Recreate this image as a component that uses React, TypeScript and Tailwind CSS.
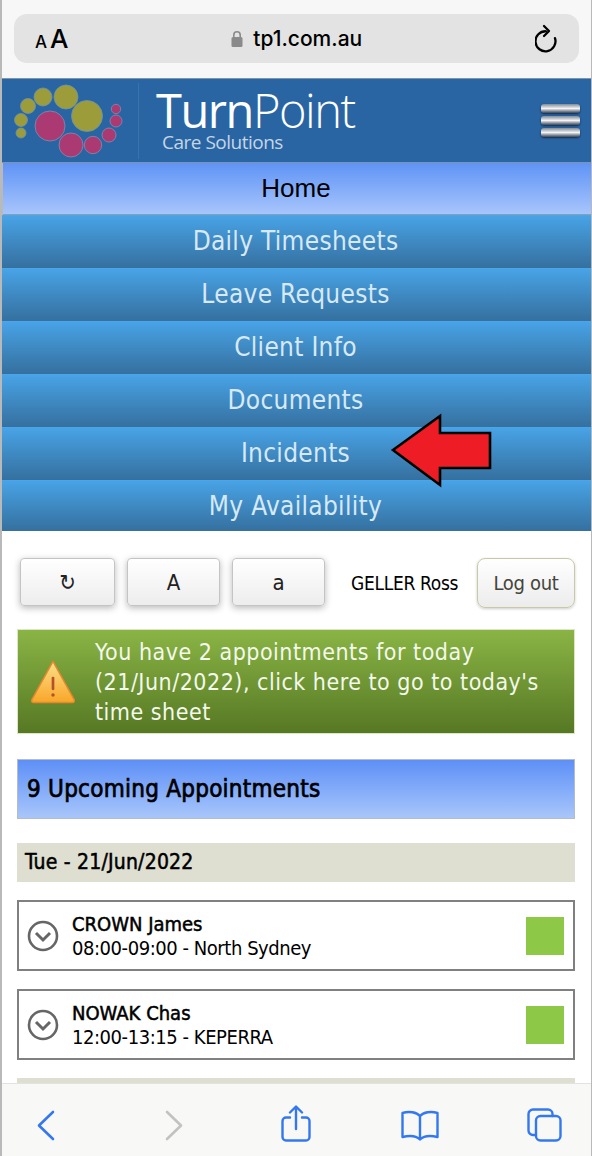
const navItems = ['Daily Timesheets', 'Leave Requests', 'Client Info', 'Documents', 'Incidents', 'My Availability'];

const appointments = [
  { name: 'CROWN James', detail: '08:00-09:00 - North Sydney' },
  { name: 'NOWAK Chas', detail: '12:00-13:15 - KEPERRA' },
];

function LogoDots() {
  return (
    <svg width="134" height="83" viewBox="2 79 134 83" className="shrink-0">
      <g fill="#9c9c3a" stroke="#6f93a8" strokeWidth="0.8">
        <circle cx="66" cy="97" r="12" />
        <circle cx="87" cy="116" r="15.5" />
        <circle cx="43" cy="97" r="9" />
        <circle cx="28" cy="106" r="7.5" />
        <circle cx="21" cy="120" r="6.5" />
        <circle cx="21" cy="133" r="5" />
      </g>
      <g fill="#ac3a72" stroke="#7d8fb0" strokeWidth="0.8">
        <circle cx="50" cy="126" r="15" />
        <circle cx="71" cy="145" r="12" />
        <circle cx="93" cy="145" r="8.7" />
        <circle cx="109" cy="135" r="7" />
        <circle cx="116" cy="121" r="6" />
        <circle cx="116" cy="109" r="4.7" />
      </g>
    </svg>
  );
}

function AppointmentCard({ name, detail }: { name: string; detail: string }) {
  return (
    <div className="mb-[18px] flex h-[71px] items-center border-2 border-[#808080] bg-white pl-[8px] pr-[9px]">
      <svg width="32" height="32" viewBox="0 0 32 32" className="shrink-0" fill="none" stroke="#666" strokeWidth="2.6">
        <circle cx="16" cy="16" r="14" />
        <path d="M9 13l7 7 7-7" strokeWidth="3" />
      </svg>
      <div className="ml-[13px] flex-1 text-[20px] leading-[24px] text-black">
        <div className="[-webkit-text-stroke:0.5px_black]">{name}</div>
        <div className="tracking-[-0.45px]">{detail}</div>
      </div>
      <div className="h-[38px] w-[38px] bg-[#8dc947]" />
    </div>
  );
}

function SmallButton({ label, width }: { label: string; width: string }) {
  return (
    <button className={`flex h-[48px] ${width} items-center justify-center rounded-[4px] border border-[#c4c4c4] bg-gradient-to-b from-white to-[#ededed] text-[22px] text-[#222] shadow-[0_2px_7px_rgba(0,0,0,0.28)]`}>
      {label}
    </button>
  );
}

function MenuBar() {
  return <div className="h-[9px] rounded-[3px] bg-gradient-to-b from-[#7f8c99] via-[#f4f4f4] to-[#3a4a5c] shadow-[0_1px_2px_rgba(15,30,50,0.8)]" />;
}

export default function App() {
  return (
    <div className="flex h-[1156px] w-[592px] flex-col overflow-hidden border-l-2 border-r border-[#b9b9b9] bg-white font-['DejaVu_Sans_Condensed','DejaVu_Sans',sans-serif]">
      {/* safari address bar */}
      <div className="h-[78px] shrink-0 bg-[#f7f7f7] px-[12px] pt-[14px]">
        <div className="flex h-[49px] items-center justify-between rounded-[13px] bg-[#e3e3e3] pl-[21px] pr-[20px] font-['Inter',sans-serif] text-black">
          <div className="flex items-baseline gap-[3px] font-medium">
            <span className="text-[17px] leading-none">A</span>
            <span className="text-[26px] leading-none">A</span>
          </div>
          <div className="mr-[10px] flex items-center gap-[10px] text-[21px] font-medium">
            <svg width="12" height="18" viewBox="0 0 12 18" fill="#8a8a8a">
              <path d="M2 7V5a4 4 0 0 1 8 0v2h-1.6V5a2.4 2.4 0 0 0-4.8 0v2z" />
              <rect x="0.5" y="7" width="11" height="10" rx="1.5" />
            </svg>
            tp1.com.au
          </div>
          <svg width="24" height="30" viewBox="0 0 24 30" fill="none" stroke="#000" strokeWidth="2.3" strokeLinecap="round" strokeLinejoin="round">
            <path d="M7 8.6A10 10 0 1 0 18 11" transform="rotate(25 12 17)" />
            <path d="M9 2l5 5-5 5" />
          </svg>
        </div>
      </div>

      {/* site header */}
      <div className="flex h-[85px] shrink-0 items-center border-y border-[#7c95ad] bg-[#2a65a3]">
        <LogoDots />
        <div className="ml-[2px] h-[76px] w-px bg-[#3c72a9]" />
        <div className="ml-[17px] flex-1 font-['Open_Sans',sans-serif] text-white">
          <div className="text-[47px] leading-[44px] tracking-[-1.45px]">
            <span>Turn</span>
            <span className="font-light">Point</span>
          </div>
          <div className="ml-[6px] mt-[-1px] text-[19px] leading-[22px] tracking-[-0.5px] text-[#c4d6e6]">Care Solutions</div>
        </div>
        <div className="mr-[11px] flex w-[39px] flex-col gap-[3px]">
          <MenuBar />
          <MenuBar />
          <MenuBar />
        </div>
      </div>

      {/* nav */}
      <div className="relative shrink-0 bg-[#b9b9b9]">
        {/* annotation arrow */}
        <svg width="106" height="76" viewBox="0 0 106 76" className="absolute left-[386px] top-[250px] z-10">
          <path d="M5 37 L52 3 V20 H102 V55 H52 V72 Z" fill="#ee1c25" stroke="#000" strokeWidth="2.6" />
        </svg>
        <div className="ml-px flex h-[52px] items-center justify-center border-b border-[#86a0b8] bg-gradient-to-b from-[#5f93f5] to-[#a8c5fb] pr-[2px] font-['Liberation_Sans',sans-serif] text-[26px] text-black">
          Home
        </div>
        {navItems.map((item) => (
          <div key={item} className="flex h-[53px] items-center justify-center border-t border-[#4aa6ea] bg-gradient-to-b from-[#48a3e6] to-[#35709f] pb-[2px] pr-[2px] text-[26px] tracking-[0.3px] text-[#d7e9f6] last:h-[51px] last:pb-0">
            {item}
          </div>
        ))}
      </div>

      {/* page body */}
      <div className="min-h-0 flex-1 overflow-hidden pl-[15px] pr-[16px] pt-[27px]">
        <div className="flex items-start">
          <div className="ml-[3px] flex gap-[12px]">
            <SmallButton label="↻" width="w-[95px]" />
            <SmallButton label="A" width="w-[93px]" />
            <SmallButton label="a" width="w-[93px]" />
          </div>
          <span className="ml-[26px] mt-[11px] text-[19px] tracking-[-0.3px] text-black">GELLER Ross</span>
          <button className="ml-auto h-[50px] w-[98px] rounded-[8px] border border-[#c9c9a5] bg-gradient-to-b from-white to-[#ececec] text-[20px] tracking-[-0.3px] text-[#44443a] shadow-[0_1px_3px_rgba(0,0,0,0.2)]">
            Log out
          </button>
        </div>

        <div className="mt-[21px] flex h-[105px] items-center border border-[#dbe6c6] bg-gradient-to-b from-[#8ab545] to-[#567824] pl-[12px] pr-[10px]">
          <svg width="46" height="45" viewBox="0 0 48 46" className="shrink-0">
            <defs>
              <linearGradient id="warn" x1="0" y1="0" x2="0" y2="1">
                <stop offset="0" stopColor="#fbe08a" />
                <stop offset="1" stopColor="#f9a628" />
              </linearGradient>
            </defs>
            <path d="M24 2 L46 42 Q47 45 44 45 H4 Q1 45 2 42 Z" fill="url(#warn)" stroke="#e8872e" strokeWidth="1.5" strokeLinejoin="round" />
            <rect x="22.6" y="18" width="2.8" height="14" rx="1.2" fill="#b5502c" />
            <circle cx="24" cy="37" r="1.8" fill="#b5502c" />
          </svg>
          <div className="ml-[19px] text-[23px] leading-[30px] tracking-[0.5px] text-[#f4f8ec]">
            You have 2 appointments for today (21/Jun/2022), click here to go to today's time sheet
          </div>
        </div>

        <div className="mt-[25px] flex h-[60px] items-center border border-[#b5bcc8] bg-gradient-to-b from-[#5d8ff6] to-[#a9c6fa] pl-[9px] text-[24px] tracking-[0.25px] text-black [-webkit-text-stroke:0.7px_black]">
          9 Upcoming Appointments
        </div>

        <div className="mb-[18px] mt-[24px] flex h-[39px] items-center bg-[#dedfd1] pl-[8px] text-[21px] tracking-[0.2px] text-black [-webkit-text-stroke:0.5px_black]">
          Tue - 21/Jun/2022
        </div>

        {appointments.map((a) => (
          <AppointmentCard key={a.name} name={a.name} detail={a.detail} />
        ))}

        <div className="mt-[1px] h-[39px] bg-[#dedfd1]" />
      </div>

      {/* safari toolbar */}
      <div className="flex h-[73px] shrink-0 items-start border-t border-[#e2e2e2] bg-[#f8f8f6] pl-[35px] pt-[21px]">
        <svg width="18" height="31" viewBox="0 0 18 31" fill="none" stroke="#3478f0" strokeWidth="2.6" strokeLinecap="round" strokeLinejoin="round" className="mt-[5px]">
          <path d="M16 2L2 15.5 16 29" />
        </svg>
        <svg width="18" height="31" viewBox="0 0 18 31" fill="none" stroke="#c2c2c2" strokeWidth="2.6" strokeLinecap="round" strokeLinejoin="round" className="ml-[110px] mt-[5px]">
          <path d="M2 2l14 13.5L2 29" />
        </svg>
        <svg width="30" height="37" viewBox="0 0 30 37" fill="none" stroke="#3478f0" strokeWidth="2.4" strokeLinecap="round" strokeLinejoin="round" className="ml-[98px]">
          <path d="M9 12.5H5a3.5 3.5 0 0 0-3.5 3.5v16A3.5 3.5 0 0 0 5 35.5h20a3.5 3.5 0 0 0 3.5-3.5V16a3.5 3.5 0 0 0-3.5-3.5h-4" />
          <path d="M15 24V2M9 7.5L15 1.5l6 6" />
        </svg>
        <svg width="38" height="31" viewBox="0 0 38 31" fill="none" stroke="#3478f0" strokeWidth="2.4" strokeLinecap="round" strokeLinejoin="round" className="ml-[90px] mt-[5px]">
          <path d="M19 6C15.5 2 8 1 1.5 3v24c6.5-1.5 14-1 17.5 2.5 3.5-3.5 11-4 17.5-2.5V3C30 1 22.5 2 19 6z" />
          <path d="M19 6v23" />
        </svg>
        <svg width="35" height="34" viewBox="0 0 35 34" fill="none" stroke="#3478f0" strokeWidth="2.4" strokeLinecap="round" strokeLinejoin="round" className="ml-[88px] mt-[3px]">
          <rect x="9" y="8" width="24.5" height="24.5" rx="4.5" />
          <path d="M9 27H6a4.5 4.5 0 0 1-4.5-4.5V6A4.5 4.5 0 0 1 6 1.5h15A4.5 4.5 0 0 1 25.5 6v2" />
        </svg>
      </div>
    </div>
  );
}
